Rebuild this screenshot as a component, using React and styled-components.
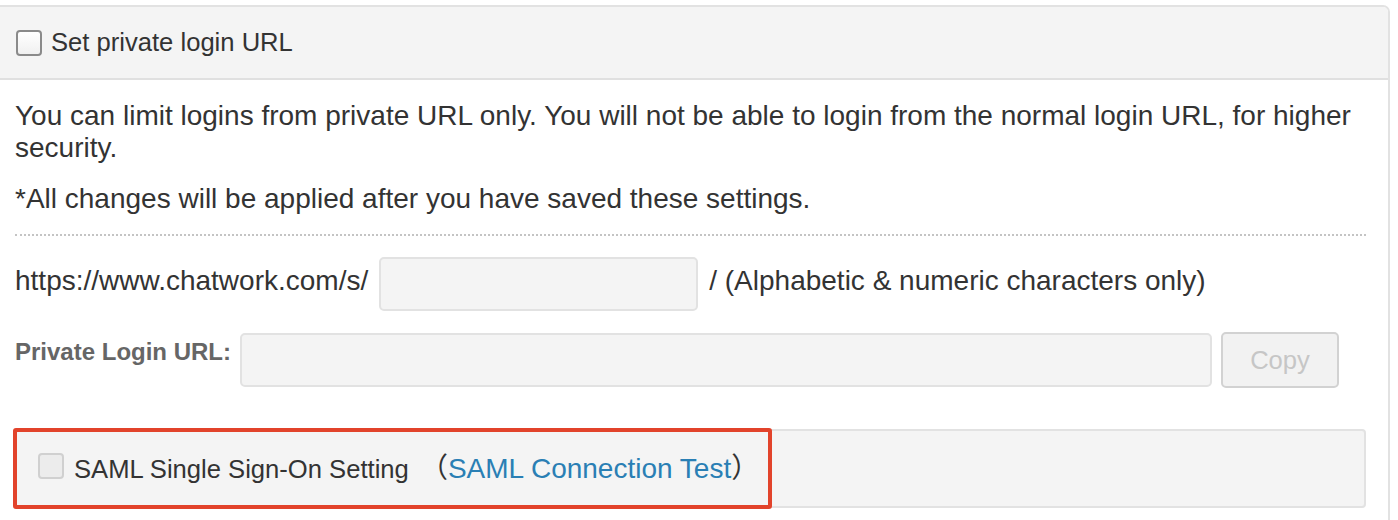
import React from "react";
import styled, { createGlobalStyle } from "styled-components";

const GlobalStyle = createGlobalStyle`
  html, body {
    margin: 0;
    padding: 0;
    background: #fff;
  }
  body {
    font-family: "Liberation Sans", Arial, "Noto Sans CJK JP", sans-serif;
    color: #333;
  }
`;

const Page = styled.div`
  padding: 5px 8px 0 0;
  overflow: hidden;
  height: 520px;
  box-sizing: border-box;
`;

const Panel = styled.section`
  margin-left: -4px;
  border: 2px solid #e2e2e2;
  border-bottom: none;
  border-radius: 0 7px 0 0;
  height: 560px;
`;

const PanelHeader = styled.label`
  display: flex;
  align-items: center;
  gap: 9px;
  height: 71px;
  padding-left: 18px;
  background: #f4f4f4;
  border-bottom: 2px solid #e0e0e0;
  border-radius: 0 5px 0 0;
  font-size: 25.6px;
  color: #333;
`;

const Box = styled.span`
  flex: none;
  width: 22px;
  height: 22px;
  border-radius: 4px;
  border: 2px solid ${(p) => (p.$muted ? "#d0d0d0" : "#8a8a8a")};
  background: ${(p) =>
    p.$muted ? "#ececec" : "linear-gradient(#ffffff, #f0f0f0)"};
`;

const Body = styled.div`
  padding: 20px 22px 0 17px;
`;

const Text = styled.p`
  margin: 0 0 ${(p) => p.$gap || 0}px;
  font-size: 28px;
  line-height: 32px;
  color: #333;
`;

const Dotted = styled.hr`
  margin: 0;
  border: none;
  border-top: 2px dotted #c4c4c4;
`;

const Row = styled.div`
  display: flex;
  align-items: center;
  gap: ${(p) => p.$gap || 10}px;
  margin-top: ${(p) => p.$top || 0}px;
  font-size: 28px;
  color: #333;
`;

const RowText = styled.span`
  margin-bottom: 6px;
`;

const Field = styled.div`
  flex: ${(p) => (p.$grow ? 1 : "none")};
  width: ${(p) => (p.$width ? `${p.$width}px` : "auto")};
  height: ${(p) => p.$height || 54}px;
  box-sizing: border-box;
  background: #f4f4f4;
  border: 2px solid #e2e2e2;
  border-radius: 5px;
`;

const Label = styled.span`
  margin-bottom: 16px;
  font-size: 24px;
  font-weight: bold;
  color: #666;
`;

const CopyButton = styled.button`
  flex: none;
  width: 118px;
  height: 56px;
  margin-right: 27px;
  background: #f2f2f2;
  border: 2px solid #d2d2d2;
  border-radius: 5px;
  font-family: inherit;
  font-size: 25.6px;
  color: #c6c6c6;
`;

const SamlWrap = styled.div`
  position: relative;
  margin-top: 41px;
`;

const SamlBox = styled.label`
  display: flex;
  align-items: center;
  gap: 10px;
  height: 79px;
  box-sizing: border-box;
  padding: 0 0 6px 21px;
  background: #f4f4f4;
  border: 2px solid #e2e2e2;
  border-radius: 4px;
  font-size: 25.6px;
  color: #333;
`;

const Paren = styled.span`
  margin-left: ${(p) => p.$left || 0}px;
  font-family: "Noto Sans CJK JP", sans-serif;
  font-size: 28px;
  color: #333;
`;

const Link = styled.a`
  font-size: 28px;
  color: #2a7fb4;
  text-decoration: none;
`;

const Highlight = styled.div`
  position: absolute;
  left: -2px;
  top: -1px;
  width: 759px;
  height: 81px;
  box-sizing: border-box;
  border: 4px solid #e2432b;
  border-radius: 3px;
  pointer-events: none;
`;

export default function App() {
  return (
    <>
      <GlobalStyle />
      <Page>
        <Panel>
          <PanelHeader>
            <Box />
            Set private login URL
          </PanelHeader>
          <Body>
            <Text $gap={19}>
              You can limit logins from private URL only. You will not be able
              to login from the normal login URL, for higher security.
            </Text>
            <Text $gap={19}>
              *All changes will be applied after you have saved these settings.
            </Text>
            <Dotted />
            <Row $top={21} $gap={11}>
              <RowText>https://www.chatwork.com/s/</RowText>
              <Field $width={319} />
              <RowText>/ (Alphabetic &amp; numeric characters only)</RowText>
            </Row>
            <Row $top={21} $gap={9}>
              <Label>Private Login URL:</Label>
              <Field $grow $height={54} />
              <CopyButton type="button">Copy</CopyButton>
            </Row>
            <SamlWrap>
              <SamlBox>
                <Box $muted />
                <span>
                  SAML Single Sign-On Setting <Paren $left={4}>（</Paren>
                  <Link href="#saml-test">SAML Connection Test</Link>
                  <Paren>）</Paren>
                </span>
              </SamlBox>
              <Highlight />
            </SamlWrap>
          </Body>
        </Panel>
      </Page>
    </>
  );
}
